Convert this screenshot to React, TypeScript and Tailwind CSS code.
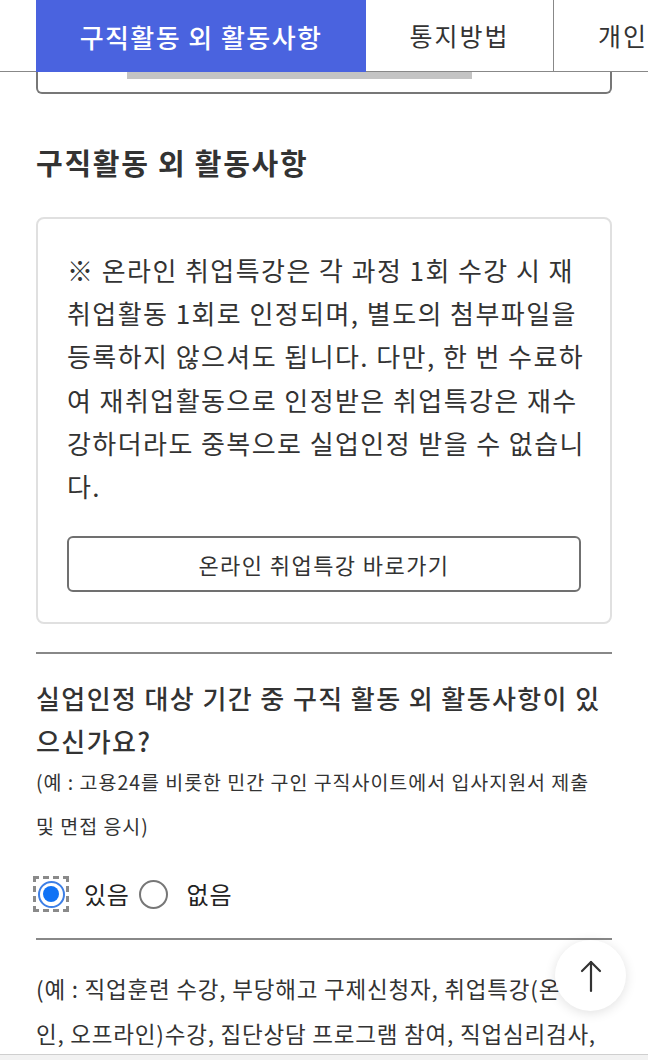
import React from "react";

const FONT = { fontFamily: '"Noto Sans CJK KR", "Noto Sans", sans-serif' };

export default function App() {
  return (
    <div className="min-h-[1060px] bg-white text-[#333]" style={FONT}>
      {/* Tab bar */}
      <div className="flex h-[72px] w-[648px] overflow-hidden">
        <div className="w-[36px] shrink-0 border-b border-[#888]" />
        <div className="flex w-[330px] shrink-0 items-center justify-center bg-[#4a63df] text-[26px] font-medium tracking-[0.055em] text-white">
          구직활동 외 활동사항
        </div>
        <div className="flex w-[188px] shrink-0 items-center justify-center border-b border-r border-[#888] text-[25px] tracking-[0.08em] text-[#333]">
          통지방법
        </div>
        <div className="flex w-[94px] shrink-0 items-center overflow-hidden whitespace-nowrap border-b border-[#888] pl-[44px] text-[25px] tracking-[0.08em] text-[#333]">
          개인
        </div>
      </div>

      <div className="px-[36px]">
        {/* Bottom of previous box */}
        <div className="relative h-[22px] rounded-b-[6px] border-x-2 border-b-2 border-[#777]">
          <div className="absolute left-[89px] top-0 h-[7px] w-[345px] bg-[#c4c4c4]" />
        </div>

        <h2 className="mt-[48px] text-[29px] font-bold leading-[40px] tracking-[0.06em] text-[#333]">
          구직활동 외 활동사항
        </h2>

        {/* Notice card */}
        <div className="mt-[35px] rounded-[8px] border-2 border-[#e0e0e0] px-[29px] pb-[30px] pt-[29px]">
          <div className="whitespace-nowrap text-[26px] leading-[43.2px] tracking-[0.055em] text-[#333]">
            <div>※ 온라인 취업특강은 각 과정 1회 수강 시 재</div>
            <div>취업활동 1회로 인정되며, 별도의 첨부파일을</div>
            <div>등록하지 않으셔도 됩니다. 다만, 한 번 수료하</div>
            <div>여 재취업활동으로 인정받은 취업특강은 재수</div>
            <div>강하더라도 중복으로 실업인정 받을 수 없습니</div>
            <div>다.</div>
          </div>
          <button className="mt-[29px] flex h-[56px] w-full items-center justify-center rounded-[6px] border-2 border-[#707070] bg-white text-[22px] tracking-[0.065em] text-[#333]">
            온라인 취업특강 바로가기
          </button>
        </div>

        <div className="mt-[28px] h-[2px] bg-[#888]" />

        <div className="mt-[22px] whitespace-nowrap text-[26px] font-medium leading-[43px] tracking-[0.054em] text-[#333]">
          <div>실업인정 대상 기간 중 구직 활동 외 활동사항이 있</div>
          <div>으신가요?</div>
        </div>
        <div className="-mt-[2px] whitespace-nowrap text-[19.5px] leading-[44px] tracking-[0.05em] text-[#333]">
          <div>(예 : 고용24를 비롯한 민간 구인 구직사이트에서 입사지원서 제출</div>
          <div>및 면접 응시)</div>
        </div>

        {/* Radios */}
        <div className="mt-[28px] flex h-[36px] items-center">
          <div className="-ml-[3px] flex h-[36px] w-[36px] shrink-0 items-center justify-center border-[3px] border-dashed border-[#8a8a8a]">
            <div className="flex h-[27px] w-[27px] items-center justify-center rounded-full border-2 border-[#3d7fe6] bg-white">
              <div className="h-[16px] w-[16px] rounded-full bg-[#1173f5]" />
            </div>
          </div>
          <span className="ml-[15px] text-[24px] leading-[36px] tracking-[0.03em] text-[#222]">있음</span>
          <div className="ml-[9px] h-[29px] w-[29px] shrink-0 rounded-full border-2 border-[#777] bg-white" />
          <span className="ml-[19px] text-[24px] leading-[36px] tracking-[0.03em] text-[#222]">없음</span>
        </div>

        <div className="mt-[26px] h-[2px] bg-[#888]" />

        <div className="mt-[26px] whitespace-nowrap text-[22.5px] leading-[45px] tracking-[0.035em] text-[#333]">
          <div>(예 : 직업훈련 수강, 부당해고 구제신청자, 취업특강(온라</div>
          <div>인, 오프라인)수강, 집단상담 프로그램 참여, 직업심리검사,</div>
        </div>
      </div>

      {/* Scroll to top button */}
      <button className="fixed bottom-[49px] right-[22px] flex h-[71px] w-[71px] items-center justify-center rounded-full bg-white shadow-[0_2px_12px_rgba(0,0,0,0.12)]">
        <svg width="30" height="34" viewBox="0 0 30 34" fill="none" stroke="#333" strokeWidth="2.2" strokeLinecap="round" strokeLinejoin="round">
          <path d="M15 32V3" />
          <path d="M6 12L15 3l9 9" />
        </svg>
      </button>

      {/* Bottom bar edge */}
      <div className="fixed bottom-0 left-0 h-[6px] w-full border-t border-[#cfcfcf] bg-[#f2f2f2]" />
    </div>
  );
}
